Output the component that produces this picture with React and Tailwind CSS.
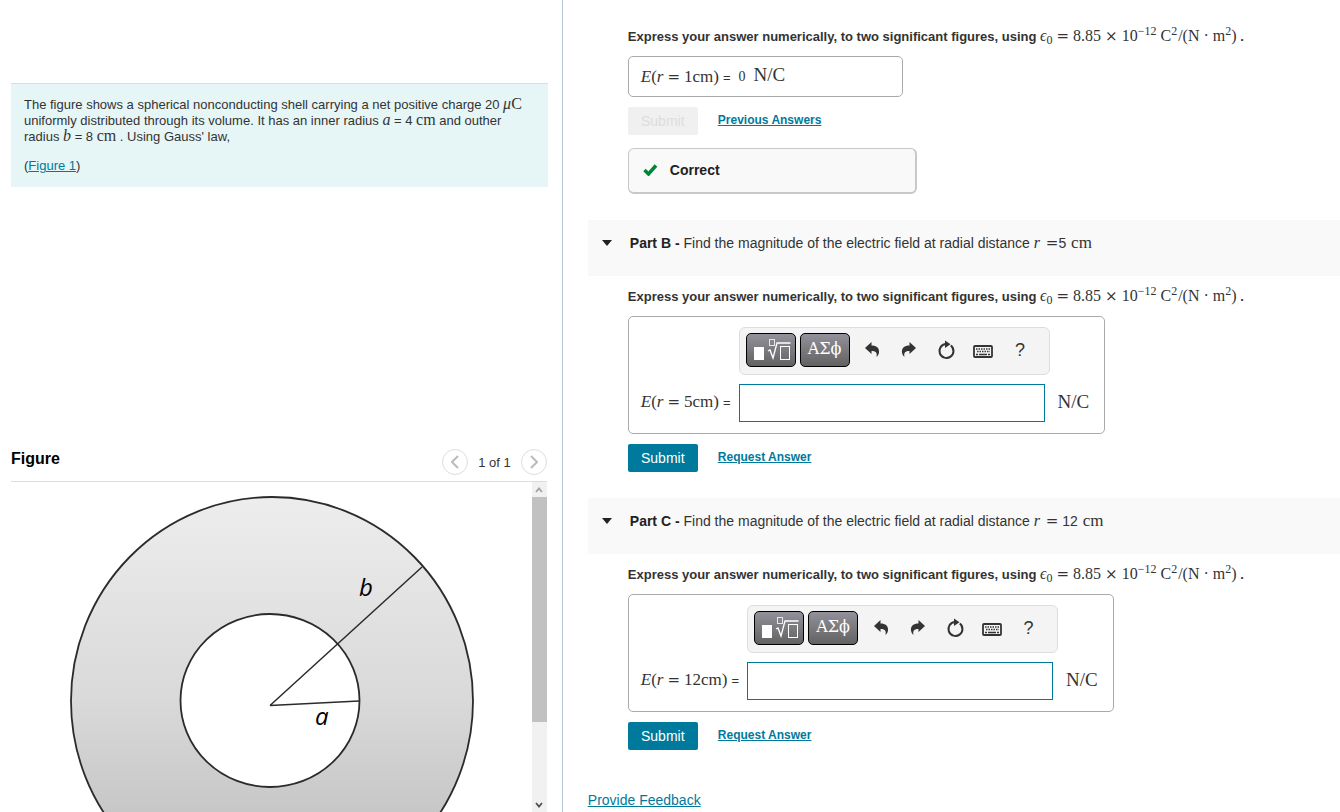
import React, { useState } from 'react';

const parts = [
  { id: 'B', radius: '5' },
  { id: 'C', radius: '12' },
];

function Var({ children }) {
  return <i className="font-['Liberation_Serif',serif] text-base leading-[0]">{children}</i>;
}

function Rm({ children }) {
  return <span className="font-['Liberation_Serif',serif] text-base leading-[0]">{children}</span>;
}

function Op({ children }) {
  return <span className="font-['DejaVu_Serif',serif] text-[15px] leading-[0]">{children}</span>;
}

function Sup({ children }) {
  return <sup className="text-xs leading-[0]">{children}</sup>;
}

function Prompt() {
  return (
    <p className="pt-[13px] pb-[11px] text-[13px] leading-4 font-bold whitespace-nowrap text-[#333]">
      Express your answer numerically, to two significant figures, using{' '}
      <span className="font-['Liberation_Serif',serif] text-base leading-[0] font-normal">
        <i>ϵ</i><sub className="text-xs leading-[0]">0</sub>
        <span className="mx-1"><Op>=</Op></span>8.85<span className="mx-1"><Op>×</Op></span>10<Sup>−12</Sup>
        <span className="mr-px ml-1">C<Sup>2</Sup></span>/(N<span className="mx-1">·</span>m<Sup>2</Sup>)
      </span>{' '}
      .
    </p>
  );
}

function FieldName({ radius }) {
  return (
    <span className="whitespace-nowrap text-[#333]">
      <span className="font-['Liberation_Serif',serif] text-[17px] leading-none">
        <i>E</i>(<i>r</i><span className="mx-1"><Op>=</Op></span>{radius}cm)
      </span>
      <span className="ml-1 text-[13px]">=</span>
    </span>
  );
}

function Units() {
  return <span className="pb-1 font-['Liberation_Serif',serif] text-[19px] leading-none text-[#333]">N/C</span>;
}

function Toolbar() {
  const dark = 'flex h-[34px] w-[50px] items-center justify-center rounded-[5px] border border-black bg-gradient-to-b from-[#93919b] to-[#626262] text-white';
  const plain = 'flex h-[34px] w-[37px] items-center justify-center text-[#333]';
  return (
    <div className="flex w-[311px] items-start rounded-md border border-[#ddd] bg-[#f4f4f4] px-[6px] pt-[5px] pb-[7px]">
      <button type="button" aria-label="Templates" className={`${dark} mr-1`}>
        <svg width="40" height="24" viewBox="0 0 40 24" fill="none" stroke="currentColor">
          <rect x="3" y="9" width="10" height="13" fill="currentColor" stroke="none" />
          <path d="M17 13l2-1 3 8 4-15h13.500" strokeWidth="1.3" />
          <rect x="18.5" y="1.5" width="5" height="6" opacity="0.8" />
          <rect x="29.5" y="8.5" width="9" height="13" />
        </svg>
      </button>
      <button type="button" className={`${dark} mr-1 pb-[2px] font-['DejaVu_Serif',serif] text-base`}>ΑΣϕ</button>
      <button type="button" aria-label="Undo" className={plain}>
        <svg width="16" height="18" viewBox="0 0 16 18" fill="currentColor">
          <path d="M1 7 7.500 1v3.500c5 0 8 2.500 7.500 7-.3 2-1 3-2.500 4.500 1-4.500-1-6-5-6v3z" />
        </svg>
      </button>
      <button type="button" aria-label="Redo" className={plain}>
        <svg width="16" height="18" viewBox="0 0 16 18" fill="currentColor">
          <path d="M15 7 8.500 1v3.500c-5 0-8 2.500-7.500 7 .3 2 1 3 2.500 4.500-1-4.500 1-6 5-6v3z" />
        </svg>
      </button>
      <button type="button" aria-label="Reset" className={plain}>
        <svg width="18" height="20" viewBox="0 0 18 20" fill="none" stroke="currentColor" strokeWidth="2">
          <path d="M13.800 5.500A7 7 0 1 1 9 4" />
          <path d="M8 .5l5.500 3.700L8 8z" fill="currentColor" stroke="none" />
        </svg>
      </button>
      <button type="button" aria-label="Keyboard" className={plain}>
        <svg width="20" height="14" viewBox="0 0 20 14" className="mt-1" fill="none" stroke="currentColor">
          <rect x="1" y="1" width="18" height="11" rx="1" strokeWidth="1.8" />
          <path d="M3 4h14M4 6.500h13" strokeWidth="1.4" strokeDasharray="1.5 1" />
          <path d="M3 9.500h2M6 9.500h8M15 9.500h2" strokeWidth="1.4" />
        </svg>
      </button>
      <button type="button" aria-label="Help" className={`${plain} text-lg`}>?</button>
    </div>
  );
}

function Part({ id, radius }) {
  const [value, setValue] = useState('');
  const [open, setOpen] = useState(true);

  return (
    <section className="mb-[26px]">
      <h2 className="flex h-14 items-start bg-[#f9f9f9] pt-[14px] pl-[14px] text-sm leading-[18px] text-[#333]">
        <button type="button" aria-label={`Toggle Part ${id}`} className="flex h-[18px] w-[28px] items-center" onClick={() => setOpen(o => !o)}>
          <svg width="10" height="6" viewBox="0 0 10 6" fill="#222"><path d="M0 0h10L5 6z" /></svg>
        </button>
        <span className="whitespace-nowrap">
          <b className="text-[#222]">Part {id} -</b> Find the magnitude of the electric field at radial distance{' '}
          <Var>r</Var> <span className="ml-[2px]"><Op>=</Op></span>{id === 'C' && ' '}{radius}{' '}
          <span className="ml-px font-['Liberation_Serif',serif] text-[17px] leading-[0]">cm</span>
        </span>
      </h2>
      {open && (
        <form className="pl-10" onSubmit={e => e.preventDefault()}>
          <Prompt />
          <div className="inline-grid grid-cols-[auto_auto_auto] items-center gap-x-2 gap-y-[9px] rounded-[5px] border border-[#aaa] pt-[10px] pr-[15px] pb-[11px] pl-3 align-top">
            <div className="col-start-2"><Toolbar /></div>
            <label htmlFor={`field-${id}`} className="col-start-1 pb-[2px]"><FieldName radius={radius} /></label>
            <input
              id={`field-${id}`}
              value={value}
              onChange={e => setValue(e.target.value)}
              className="h-[38px] w-[306px] border border-[#007a9c] bg-white px-2 outline-none"
            />
            <Units />
          </div>
          <div className="mt-[10px] flex items-center gap-5">
            <button type="submit" className="h-7 w-[70px] rounded-[2px] bg-[#007a9c] text-sm text-white">Submit</button>
            <a href="#answer" className="pb-[2px] text-xs font-bold text-[#007a9c] underline">Request Answer</a>
          </div>
        </form>
      )}
    </section>
  );
}

function ShellDrawing() {
  return (
    <svg width="521" height="440" viewBox="0 0 521 440" className="shrink-0" role="img" aria-label="Spherical shell">
      <defs>
        <linearGradient id="shell" x1="0" y1="0" x2="0" y2="1">
          <stop offset="0" stopColor="#ededed" />
          <stop offset="0.5" stopColor="#d9d9d9" />
          <stop offset="1" stopColor="#b8b8b8" />
        </linearGradient>
      </defs>
      <g stroke="#2b2b2b" strokeWidth="1.8">
        <ellipse cx="261" cy="219" rx="201" ry="204" fill="url(#shell)" />
        <ellipse cx="259" cy="218.500" rx="89.500" ry="86.500" fill="#fff" />
        <path d="M259 223.500 411 85M259 223.500l89-4.500" fill="none" strokeWidth="1.5" />
      </g>
      <g fontFamily="'Open Sans', sans-serif" fontStyle="italic" fontSize="24">
        <text x="348" y="114">b</text>
        <text x="304" y="243">a</text>
      </g>
    </svg>
  );
}

function FigurePanel() {
  const round = 'flex size-[26px] items-center justify-center rounded-full border border-[#ddd] text-[#bbb]';
  return (
    <section className="flex h-[370px] shrink-0 flex-col pr-[15px] pl-[11px]">
      <div className="flex h-10 items-center border-b border-[#ddd]">
        <h2 className="flex-1 pb-[6px] text-base font-bold text-black">Figure</h2>
        <button type="button" aria-label="Previous figure" className={round}>
          <svg width="8" height="14" viewBox="0 0 8 14" fill="none" stroke="currentColor" strokeWidth="2"><path d="M7 1 1 7l6 6" /></svg>
        </button>
        <span className="px-[10px] pt-[2px] text-[13px] text-[#333]">1 of 1</span>
        <button type="button" aria-label="Next figure" className={round}>
          <svg width="8" height="14" viewBox="0 0 8 14" fill="none" stroke="currentColor" strokeWidth="2"><path d="M1 1l6 6-6 6" /></svg>
        </button>
      </div>
      <div className="flex min-h-0 flex-1">
        <div className="min-w-0 flex-1 overflow-hidden"><ShellDrawing /></div>
        <div className="flex w-[15px] flex-col bg-[#f1f1f1]">
          <div className="flex h-[15px] items-center justify-center">
            <svg width="8" height="6" viewBox="0 0 8 6" fill="none" stroke="#a3a3a3" strokeWidth="1.8"><path d="M1 5l3-3.500L7 5" /></svg>
          </div>
          <div className="flex-[3] bg-[#c1c1c1]" />
          <div className="flex-1" />
          <div className="flex h-[15px] items-center justify-center">
            <svg width="8" height="6" viewBox="0 0 8 6" fill="none" stroke="#505050" strokeWidth="1.8"><path d="M1 1l3 3.500L7 1" /></svg>
          </div>
        </div>
      </div>
    </section>
  );
}

export default function App() {
  return (
    <div className="flex h-screen overflow-hidden bg-white font-['Liberation_Sans',Arial,sans-serif]">
      <aside className="flex w-[42%] shrink-0 flex-col border-r border-[#b5c7d8]">
        <div className="flex-1 pt-[83px] pr-[14px] pl-[11px]">
          <div className="border-t border-[#ddd] bg-[#e6f6f6] p-[13px] text-[13px] leading-4 text-[#333]">
            <p>
              The figure shows a spherical nonconducting shell carrying a net positive charge 20 <Var>μ</Var><Rm>C</Rm>{' '}
              uniformly distributed through its volume. It has an inner radius <Var>a</Var> = 4 <Rm>cm</Rm> and outher
              radius <Var>b</Var> = 8 <Rm>cm</Rm> . Using Gauss' law,
            </p>
            <p className="mt-[13px]">(<a href="#figure" className="text-[#007a9c] underline">Figure 1</a>)</p>
          </div>
        </div>
        <FigurePanel />
      </aside>

      <main className="min-w-0 flex-1 overflow-hidden pt-4 pl-[25px]">
        <section className="mb-[26px] pl-10">
          <Prompt />
          <div className="flex h-[41px] w-[275px] items-center rounded-[5px] border border-[#aaa] pl-3">
            <FieldName radius="1" />
            <span className="mx-2 font-['Liberation_Serif',serif] text-sm text-[#333]">0</span>
            <Units />
          </div>
          <div className="mt-[10px] flex items-center gap-5">
            <button type="button" disabled className="h-7 w-[70px] rounded-[2px] bg-[#f0f0f0] text-sm text-[#ddd]">Submit</button>
            <a href="#previous" className="pb-[2px] text-xs font-bold text-[#007a9c] underline">Previous Answers</a>
          </div>
          <div className="mt-[13px] flex h-[46px] w-[289px] items-center gap-3 rounded-md border border-r-2 border-b-2 border-[#c8c8c8] bg-[#f9f9f9] pb-px pl-[14px]">
            <svg width="15" height="12" viewBox="0 0 15 12" fill="none" stroke="#008638" strokeWidth="3.500"><path d="M1.500 6l4 4L13 1.500" /></svg>
            <strong className="text-sm text-[#222]">Correct</strong>
          </div>
        </section>
        {parts.map(part => (
          <Part key={part.id} {...part} />
        ))}
        <a href="#feedback" className="mt-[40px] block text-sm leading-5 text-[#007a9c] underline">Provide Feedback</a>
      </main>
    </div>
  );
}
